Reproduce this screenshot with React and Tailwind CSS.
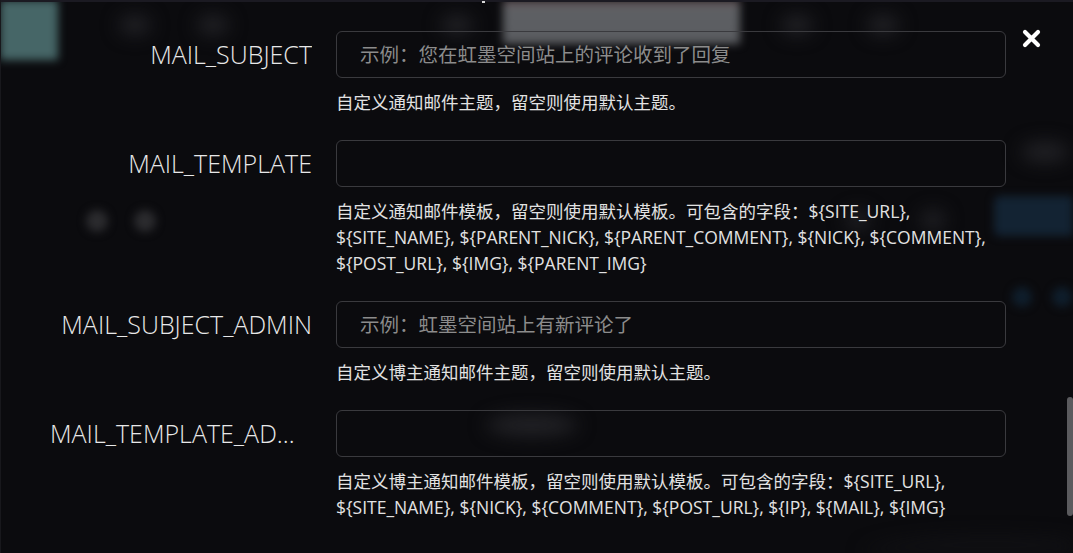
const rows = [
  {
    key: "MAIL_SUBJECT",
    placeholder: "示例：您在虹墨空间站上的评论收到了回复",
    help: "自定义通知邮件主题，留空则使用默认主题。",
  },
  {
    key: "MAIL_TEMPLATE",
    placeholder: "",
    help: "自定义通知邮件模板，留空则使用默认模板。可包含的字段：${SITE_URL}, ${SITE_NAME}, ${PARENT_NICK}, ${PARENT_COMMENT}, ${NICK}, ${COMMENT}, ${POST_URL}, ${IMG}, ${PARENT_IMG}",
  },
  {
    key: "MAIL_SUBJECT_ADMIN",
    placeholder: "示例：虹墨空间站上有新评论了",
    help: "自定义博主通知邮件主题，留空则使用默认主题。",
  },
  {
    key: "MAIL_TEMPLATE_ADMIN",
    placeholder: "",
    help: "自定义博主通知邮件模板，留空则使用默认模板。可包含的字段：${SITE_URL}, ${SITE_NAME}, ${NICK}, ${COMMENT}, ${POST_URL}, ${IP}, ${MAIL}, ${IMG}",
  },
];

// the page behind the dialog, seen blurred through it
function Backdrop() {
  return (
    <div aria-hidden className="pointer-events-none absolute inset-0">
      <svg className="absolute inset-0 h-full w-full blur-[4px]" viewBox="0 0 1073 553" preserveAspectRatio="none">
        <defs>
          <linearGradient id="card" x1="0" y1="0" x2="0" y2="1">
            <stop offset="0" stopColor="#6a4a4d" />
            <stop offset="0.25" stopColor="#5e6064" />
            <stop offset="1" stopColor="#5a5c60" />
          </linearGradient>
        </defs>
        <rect x="-6" y="-6" width="64" height="66" fill="#466667" />
        <rect x="503" y="-4" width="237" height="48" fill="url(#card)" />
        <circle cx="97" cy="221" r="11" fill="#2b2b2e" />
        <circle cx="145" cy="221" r="11" fill="#2b2b2e" />
        <rect x="994" y="196" width="90" height="40" rx="6" fill="#132333" />
        <circle cx="1022" cy="297" r="10" fill="#0f1e2c" />
        <circle cx="1062" cy="297" r="10" fill="#0f1e2c" />
      </svg>
      <svg className="absolute inset-0 h-full w-full blur-[9px]" viewBox="0 0 1073 553" preserveAspectRatio="none">
        <g fill="#222226">
          <ellipse cx="135" cy="25" rx="16" ry="10" />
          <ellipse cx="213" cy="25" rx="16" ry="10" />
          <ellipse cx="457" cy="25" rx="16" ry="10" />
          <ellipse cx="797" cy="25" rx="16" ry="10" />
          <ellipse cx="883" cy="25" rx="16" ry="10" />
          <ellipse cx="1045" cy="152" rx="24" ry="10" />
          <ellipse cx="858" cy="220" rx="12" ry="10" />
          <ellipse cx="933" cy="220" rx="12" ry="10" />
          <ellipse cx="532" cy="425" rx="46" ry="11" />
        </g>
        <ellipse cx="990" cy="556" rx="130" ry="20" fill="#111114" />
      </svg>
      <svg className="absolute inset-0 h-full w-full" viewBox="0 0 1073 553" preserveAspectRatio="none">
        <rect x="0" y="0" width="1073" height="2" fill="#1b1a22" />
        <rect x="482" y="1" width="3" height="2" fill="#d8d8d8" />
        <rect x="0" y="0" width="1" height="553" fill="#18181c" />
      </svg>
    </div>
  );
}

function Row({ item }) {
  return (
    <div className="flex items-start gap-[24px]">
      <div className="h-[47px] w-[262px] truncate text-right text-[25px] font-light leading-[47px] text-[#e8e8e8]">
        {item.key}
      </div>
      <div className="flex w-[670px] flex-col gap-[11px]">
        <input
          type="text"
          placeholder={item.placeholder}
          className="block h-[47px] w-full rounded-[6px] border border-[#3a3a3e] bg-transparent px-[23px] text-[19.5px] text-[#e6e6e6] outline-none placeholder:text-[#8c8c8c]"
        />
        <p className="text-[17.5px] leading-[26px] text-[#e2e2e2]">{item.help}</p>
      </div>
    </div>
  );
}

export default function App() {
  return (
    <div
      className="relative h-screen w-full overflow-hidden bg-[#0b0b0e]"
      style={{ fontFamily: '"Open Sans", "Noto Sans CJK SC", sans-serif' }}
    >
      <Backdrop />

      <div className="relative flex flex-col gap-[25px] pl-[50px] pt-[31px]">
        {rows.map((item) => (
          <Row key={item.key} item={item} />
        ))}
      </div>

      <button
        type="button"
        aria-label="关闭"
        className="absolute left-[1022px] top-[29px] flex h-[19px] w-[19px] items-center justify-center text-white"
      >
        <svg viewBox="0 0 19 19" className="h-[19px] w-[19px]">
          <path
            d="M3 3 L16 16 M16 3 L3 16"
            stroke="currentColor"
            strokeWidth="4.2"
            strokeLinecap="round"
          />
        </svg>
      </button>

      {/* scrollbar thumb */}
      <div className="absolute left-[1067px] top-[397px] h-[119px] w-[6px] rounded-full bg-[#5b5b5e]"></div>
    </div>
  );
}
